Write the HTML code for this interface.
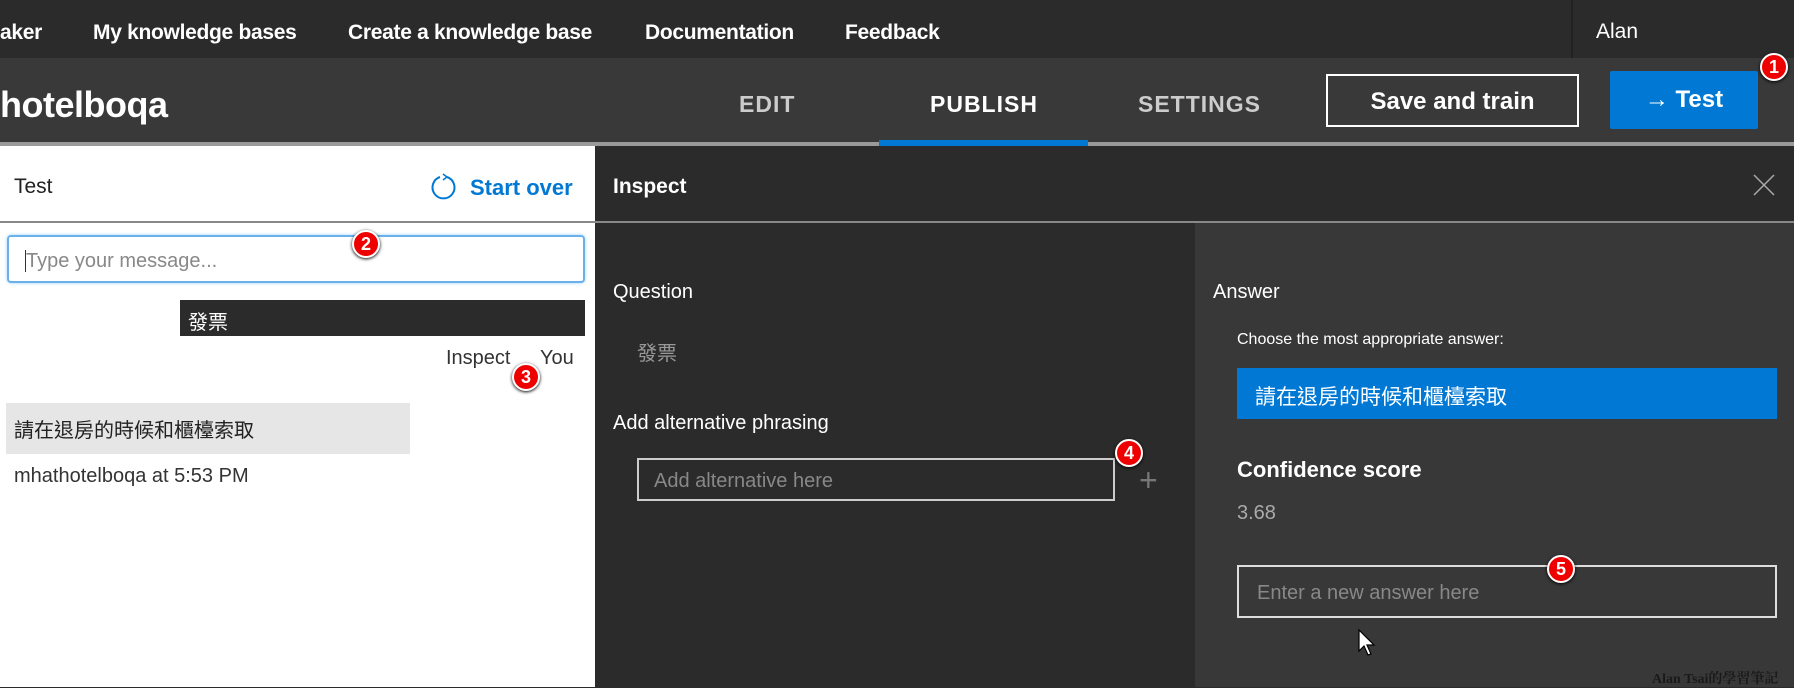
<!DOCTYPE html>
<html><head><meta charset="utf-8"><style>
*{margin:0;padding:0;box-sizing:border-box}
body{width:1794px;height:687px;overflow:hidden;background:#2b2b2b;font-family:"Liberation Sans","Noto Sans CJK TC",sans-serif;position:relative}
.a{position:absolute;white-space:nowrap}
.nav{color:#fff;font-size:21px;font-weight:bold;top:21px;letter-spacing:-0.3px}
.tab{font-size:23px;font-weight:bold;letter-spacing:1px;top:91px}
.badge{position:absolute;width:28px;height:28px;border-radius:50%;background:#e00;border:2px solid #fff;color:#fff;font-size:18px;font-weight:bold;text-align:center;line-height:24px;box-shadow:0 1px 3px #000}
</style></head><body>
<div class="a" style="left:0;top:0;width:1794px;height:58px;background:#2b2b2b"></div>
<div class="a nav" style="left:0">aker</div>
<div class="a nav" style="left:93px">My knowledge bases</div>
<div class="a nav" style="left:348px">Create a knowledge base</div>
<div class="a nav" style="left:645px">Documentation</div>
<div class="a nav" style="left:845px">Feedback</div>
<div class="a" style="left:1571px;top:0;width:2px;height:58px;background:#222"></div>
<div class="a" style="left:1596px;top:20px;color:#fff;font-size:21px">Alan</div>

<div class="a" style="left:0;top:58px;width:1794px;height:84px;background:#393939"></div>
<div class="a" style="left:0;top:84px;color:#fff;font-size:36px;font-weight:bold;letter-spacing:-0.5px">hotelboqa</div>
<div class="a tab" style="left:739px;color:#ccc">EDIT</div>
<div class="a tab" style="left:930px;color:#fff">PUBLISH</div>
<div class="a tab" style="left:1138px;color:#ccc">SETTINGS</div>
<div class="a" style="left:1326px;top:74px;width:253px;height:53px;border:2px solid #fff;color:#fff;font-size:24px;font-weight:bold;text-align:center;line-height:51px">Save and train</div>
<div class="a" style="left:1610px;top:71px;width:148px;height:58px;background:#0078d4;border-radius:2px;color:#fff;font-size:24px;font-weight:bold;text-align:center;line-height:58px">→ Test</div>
<div class="badge" style="left:1760px;top:53px">1</div>
<div class="a" style="left:0;top:142px;width:1794px;height:4px;background:#9a9a9a"></div>
<div class="a" style="left:879px;top:140px;width:209px;height:6px;background:#0078d4"></div>

<div class="a" style="left:0;top:146px;width:595px;height:541px;background:#fff"></div>
<div class="a" style="left:14px;top:175px;font-size:21px;color:#222">Test</div>
<svg class="a" style="left:430px;top:173px" width="28" height="28" viewBox="0 0 28 28"><path d="M10 4 A11 11 0 1 0 17 4" fill="none" stroke="#0078d4" stroke-width="2"/><path d="M13 1 L17 4 L13 7" fill="none" stroke="#0078d4" stroke-width="1.5"/></svg>
<div class="a" style="left:470px;top:175px;font-size:22px;font-weight:bold;color:#0078d4">Start over</div>
<div class="a" style="left:0;top:221px;width:1794px;height:2px;background:#888"></div>
<div class="a" style="left:7px;top:235px;width:578px;height:48px;border:2px solid #6ab0ea;border-radius:4px;box-shadow:0 0 3px #9cd0f5"></div>
<div class="a" style="left:25px;top:250px;width:1px;height:22px;background:#333"></div>
<div class="a" style="left:26px;top:250px;font-size:20px;color:#888">Type your message...</div>
<div class="badge" style="left:352px;top:230px">2</div>
<div class="a" style="left:180px;top:300px;width:405px;height:36px;background:#2b2b2b;color:#fff;font-size:20px;padding:6px 8px">發票</div>
<div class="a" style="left:446px;top:347px;font-size:20px;color:#333">Inspect</div>
<div class="a" style="left:540px;top:347px;font-size:20px;color:#333">You</div>
<div class="badge" style="left:512px;top:363px">3</div>
<div class="a" style="left:6px;top:403px;width:404px;height:51px;background:#e6e6e6;color:#222;font-size:20px;padding:11px 8px">請在退房的時候和櫃檯索取</div>
<div class="a" style="left:14px;top:465px;font-size:20px;color:#333">mhathotelboqa at 5:53 PM</div>

<div class="a" style="left:613px;top:175px;font-size:21px;font-weight:bold;color:#fff">Inspect</div>
<svg class="a" style="left:1753px;top:174px" width="22" height="22" viewBox="0 0 22 22"><path d="M1 1 L21 21 M21 1 L1 21" stroke="#aaa" stroke-width="1.5"/></svg>
<div class="a" style="left:1195px;top:223px;width:599px;height:464px;background:#383838"></div>
<div class="a" style="left:613px;top:281px;font-size:20px;color:#fff">Question</div>
<div class="a" style="left:637px;top:337px;font-size:20px;color:#999">發票</div>
<div class="a" style="left:613px;top:412px;font-size:20px;color:#fff">Add alternative phrasing</div>
<div class="a" style="left:637px;top:458px;width:478px;height:43px;border:2px solid #ccc;color:#888;font-size:20px;padding:10px 15px">Add alternative here</div>
<div class="a" style="left:1139px;top:462px;font-size:32px;color:#777;font-weight:100">+</div>
<div class="badge" style="left:1115px;top:439px">4</div>
<div class="a" style="left:1213px;top:281px;font-size:20px;color:#fff">Answer</div>
<div class="a" style="left:1237px;top:331px;font-size:16px;color:#fff">Choose the most appropriate answer:</div>
<div class="a" style="left:1237px;top:368px;width:540px;height:51px;background:#0078d4;color:#fff;font-size:21px;padding:13px 18px">請在退房的時候和櫃檯索取</div>
<div class="a" style="left:1237px;top:457px;font-size:22px;font-weight:bold;color:#fff">Confidence score</div>
<div class="a" style="left:1237px;top:502px;font-size:20px;color:#aaa">3.68</div>
<div class="a" style="left:1237px;top:565px;width:540px;height:53px;border:2px solid #ddd;color:#888;font-size:20px;padding:15px 18px">Enter a new answer here</div>
<div class="badge" style="left:1547px;top:555px">5</div>
<svg class="a" style="left:1358px;top:629px" width="20" height="30" viewBox="0 0 20 30"><path d="M1 1 L1 22 L6 17 L10 26 L13 25 L9 16 L16 16 Z" fill="#fff" stroke="#000" stroke-width="1.2"/></svg>
<div class="a" style="left:1652px;top:668px;font-size:14px;font-weight:bold;color:#1a1a1a;font-family:'Liberation Serif','Noto Serif CJK SC',serif">Alan Tsai的學習筆記</div>
</body></html>
